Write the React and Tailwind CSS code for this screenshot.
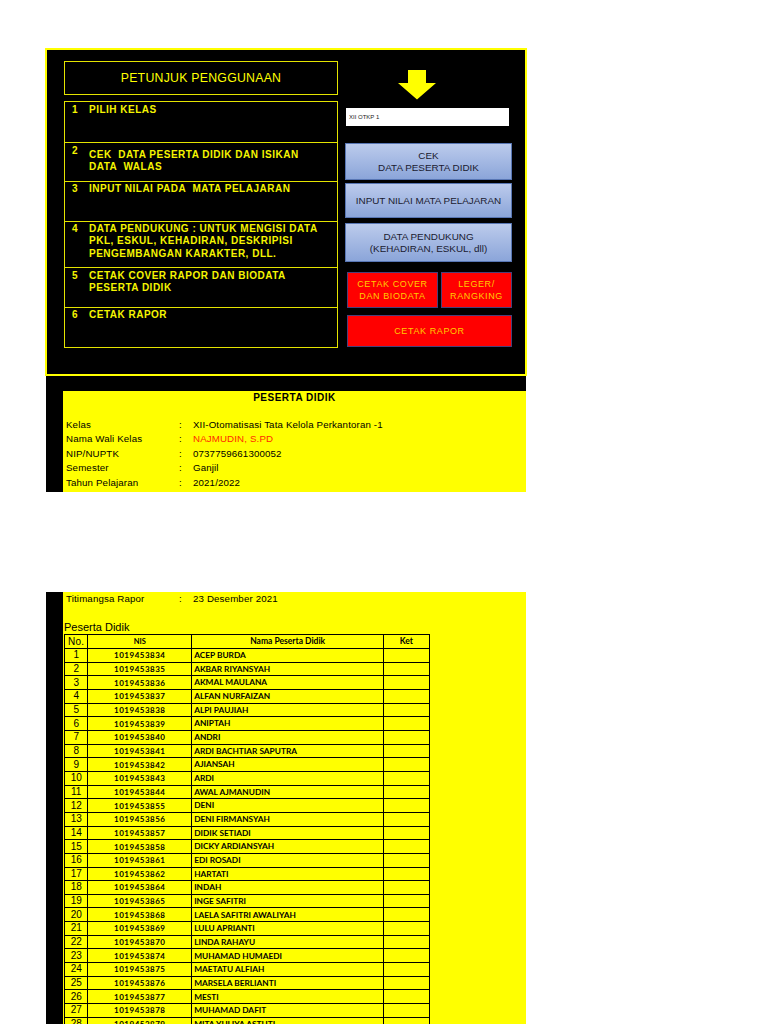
import React from "react";

const students = [
  ["1019453834", "ACEP BURDA"],
  ["1019453835", "AKBAR RIYANSYAH"],
  ["1019453836", "AKMAL MAULANA"],
  ["1019453837", "ALFAN NURFAIZAN"],
  ["1019453838", "ALPI PAUJIAH"],
  ["1019453839", "ANIPTAH"],
  ["1019453840", "ANDRI"],
  ["1019453841", "ARDI BACHTIAR SAPUTRA"],
  ["1019453842", "AJIANSAH"],
  ["1019453843", "ARDI"],
  ["1019453844", "AWAL AJMANUDIN"],
  ["1019453855", "DENI"],
  ["1019453856", "DENI FIRMANSYAH"],
  ["1019453857", "DIDIK SETIADI"],
  ["1019453858", "DICKY ARDIANSYAH"],
  ["1019453861", "EDI ROSADI"],
  ["1019453862", "HARTATI"],
  ["1019453864", "INDAH"],
  ["1019453865", "INGE SAFITRI"],
  ["1019453868", "LAELA SAFITRI AWALIYAH"],
  ["1019453869", "LULU APRIANTI"],
  ["1019453870", "LINDA RAHAYU"],
  ["1019453874", "MUHAMAD HUMAEDI"],
  ["1019453875", "MAETATU ALFIAH"],
  ["1019453876", "MARSELA BERLIANTI"],
  ["1019453877", "MESTI"],
  ["1019453878", "MUHAMAD DAFIT"],
  ["1019453879", "MITA YULIYA ASTUTI"],
];

const steps = [
  { n: "1", h: "h-[41px]", pt: "pt-[2px]", lines: ["PILIH KELAS"] },
  { n: "2", h: "h-[39px]", pt: "pt-[6px]", up: true, lines: ["CEK  DATA PESERTA DIDIK DAN ISIKAN", "DATA  WALAS"] },
  { n: "3", h: "h-[40px]", pt: "pt-[1px]", lines: ["INPUT NILAI PADA  MATA PELAJARAN"] },
  { n: "4", h: "h-[46px]", pt: "pt-[1px]", lines: ["DATA PENDUKUNG : UNTUK MENGISI DATA", "PKL, ESKUL, KEHADIRAN, DESKRIPISI", "PENGEMBANGAN KARAKTER, DLL."] },
  { n: "5", h: "h-[40px]", pt: "pt-[2px]", lines: ["CETAK COVER RAPOR DAN BIODATA", "PESERTA DIDIK"] },
  { n: "6", h: "h-[40px]", pt: "pt-[1px]", lines: ["CETAK RAPOR"] },
];

const info = [
  ["Kelas", "XII-Otomatisasi Tata Kelola Perkantoran -1", false],
  ["Nama Wali Kelas", "NAJMUDIN, S.PD", true],
  ["NIP/NUPTK", "0737759661300052", false],
  ["Semester", "Ganjil", false],
  ["Tahun Pelajaran", "2021/2022", false],
];

const arial = { fontFamily: '"Liberation Sans", Arial, sans-serif' };
const lato = { fontFamily: 'Lato, "Open Sans", sans-serif' };

function BlueButton({ className, children }) {
  return (
    <div
      className={`flex flex-col items-center justify-center border border-[#5876b4] bg-gradient-to-b from-[#bccbec] to-[#8ba5d9] text-[9.9px] leading-[12px] text-[#1a1a30] ${className}`}
      style={arial}
    >
      {children}
    </div>
  );
}

function RedButton({ className, children }) {
  return (
    <div
      className={`flex flex-col items-center justify-center border-[1.5px] border-[#4a3f7a] bg-[#ff0000] text-[9px] leading-[12px] tracking-[0.6px] text-[#ffcc00] ${className}`}
      style={arial}
    >
      {children}
    </div>
  );
}

export default function App() {
  return (
    <div className="min-h-screen bg-white pt-[48px]" style={arial}>
      {/* Top instruction panel */}
      <div className="ml-[45px] flex h-[328px] w-[482px] border-2 border-[#ffff00] bg-black pl-[17px] pt-[11px]">
        {/* Left column */}
        <div className="flex w-[274px] flex-col">
          <div className="flex h-[34px] items-center justify-center border border-[#e4e400] text-[12.3px] tracking-[0.25px] text-[#ffff00]">
            PETUNJUK PENGGUNAAN
          </div>
          <div className="mt-[6px] flex flex-col border-x border-b border-[#e4e400]">
            {steps.map((s) => (
              <div key={s.n} className={`flex border-t border-[#e4e400] ${s.h} ${s.pt}`}>
                <div
                  className={`w-[24px] pl-[7px] text-[10px] font-bold leading-[12px] text-[#f5f500] ${s.up ? "-mt-[4px]" : ""}`}
                >
                  {s.n}
                </div>
                <div className="flex flex-col text-[10px] font-bold leading-[12.3px] tracking-[0.5px] text-[#f5f500]">
                  {s.lines.map((l, i) => (
                    <span key={i} className="whitespace-pre">
                      {l}
                    </span>
                  ))}
                </div>
              </div>
            ))}
          </div>
        </div>

        {/* Right column */}
        <div className="ml-[7px] flex w-[167px] flex-col">
          <svg className="ml-[53px] mt-[9px]" width="38" height="30" viewBox="0 0 38 30">
            <polygon points="10,0 28,0 28,13 38,13 19,29.5 0,13 10,13" fill="#ffff00" />
          </svg>
          <div className="ml-[1px] mt-[8px] flex h-[18px] w-[163px] items-center bg-white pl-[3px] text-[6px] text-[#222]">
            XII OTKP 1
          </div>
          <BlueButton className="mt-[17px] h-[37px]">
            <span>CEK</span>
            <span>DATA PESERTA DIDIK</span>
          </BlueButton>
          <BlueButton className="mt-[3px] h-[35px]">
            <span>INPUT NILAI MATA PELAJARAN</span>
          </BlueButton>
          <BlueButton className="mt-[5px] h-[39px]">
            <span>DATA PENDUKUNG</span>
            <span>(KEHADIRAN, ESKUL, dll)</span>
          </BlueButton>
          <div className="ml-[2px] mt-[10px] flex h-[36px] w-[165px] gap-[3px]">
            <RedButton className="h-full w-[91px]">
              <span>CETAK COVER</span>
              <span>DAN BIODATA</span>
            </RedButton>
            <RedButton className="h-full w-[71px]">
              <span>LEGER/</span>
              <span>RANGKING</span>
            </RedButton>
          </div>
          <RedButton className="ml-[2px] mt-[7px] h-[32px] w-[165px]">
            <span>CETAK RAPOR</span>
          </RedButton>
        </div>
      </div>

      {/* Peserta didik info */}
      <div className="ml-[46px] w-[480px] bg-black pl-[17px] pt-[15px]">
        <div className="h-[101px] bg-[#ffff00] text-black">
          <div className="flex h-[13px] items-center justify-center text-[10px] font-bold tracking-[0.5px]">
            PESERTA DIDIK
          </div>
          <div className="mt-[14px] flex flex-col">
            {info.map(([label, value, red]) => (
              <div key={label} className="flex h-[14.5px] items-center text-[9.7px] tracking-[0.15px]">
                <span className="w-[116px] pl-[3px]">{label}</span>
                <span className="w-[14px]">:</span>
                <span className={red ? "text-[#ff2a00]" : ""}>{value}</span>
              </div>
            ))}
          </div>
        </div>
      </div>

      {/* Student list */}
      <div className="ml-[46px] mt-[100px] w-[480px] bg-black pl-[17px]">
        <div className="bg-[#ffff00] pb-[20px] text-black">
          <div className="flex h-[14px] items-center text-[9.7px] tracking-[0.15px]">
            <span className="w-[116px] pl-[3px]">Titimangsa Rapor</span>
            <span className="w-[14px]">:</span>
            <span>23 Desember 2021</span>
          </div>
          <div className="mt-[14px] flex h-[14px] items-center pl-[1px] text-[11px]">Peserta Didik</div>
          <div className="ml-[1px] w-[365.5px] border-l border-t border-black">
            <div className="flex h-[14px] border-b border-black">
              <div className="flex w-[23.5px] items-center justify-center border-r border-black text-[10px] tracking-[0.3px]">
                No.
              </div>
              <div
                className="flex w-[104px] items-center justify-center border-r border-black text-[7.5px] font-bold"
                style={lato}
              >
                NIS
              </div>
              <div
                className="flex w-[192.5px] items-center justify-center border-r border-black text-[8.5px] font-bold"
                style={lato}
              >
                Nama Peserta Didik
              </div>
              <div
                className="flex w-[45.5px] items-center justify-center border-r border-black text-[8.5px] font-bold"
                style={lato}
              >
                Ket
              </div>
            </div>
            {students.map(([nis, name], i) => (
              <div key={nis} className="flex h-[13.66px] border-b border-black">
                <div className="flex w-[23.5px] items-center justify-center border-r border-black text-[10px] leading-none">
                  {i + 1}
                </div>
                <div
                  className="flex w-[104px] items-center justify-center border-r border-black text-[8px] font-bold leading-none tracking-[0.5px]"
                  style={lato}
                >
                  {nis}
                </div>
                <div
                  className="flex w-[192.5px] items-center border-r border-black pl-[2px] text-[8.3px] font-bold leading-none"
                  style={lato}
                >
                  {name}
                </div>
                <div className="w-[45.5px] border-r border-black" />
              </div>
            ))}
          </div>
        </div>
      </div>
    </div>
  );
}
